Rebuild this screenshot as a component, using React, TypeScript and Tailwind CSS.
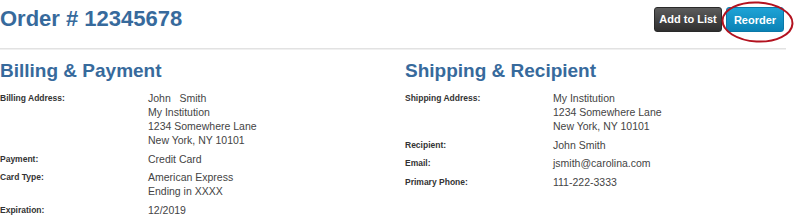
import React from "react";

type Row = { label: string; lines: string[] };

const billing: Row[] = [
  { label: "Billing Address:", lines: ["John   Smith", "My Institution", "1234 Somewhere Lane", "New York, NY 10101"] },
  { label: "Payment:", lines: ["Credit Card"] },
  { label: "Card Type:", lines: ["American Express", "Ending in XXXX"] },
  { label: "Expiration:", lines: ["12/2019"] },
];

const shipping: Row[] = [
  { label: "Shipping Address:", lines: ["My Institution", "1234 Somewhere Lane", "New York, NY 10101"] },
  { label: "Recipient:", lines: ["John Smith"] },
  { label: "Email:", lines: ["jsmith@carolina.com"] },
  { label: "Primary Phone:", lines: ["111-222-3333"] },
];

function Section({ title, rows }: { title: string; rows: Row[] }) {
  return (
    <div className="flex flex-col">
      <h2 className="text-[19px] leading-[22px] font-bold text-[#376a9c] mt-[10px]">{title}</h2>
      <div className="flex flex-col gap-[4.5px] mt-[9px]">
        {rows.map((r) => (
          <div key={r.label} className="flex">
            <div className="w-[148px] shrink-0 text-[8.5px] leading-[14px] font-bold text-[#333]">{r.label}</div>
            <div className="flex flex-col text-[10.5px] leading-[14px] text-[#444]">
              {r.lines.map((l) => (
                <span key={l} className="whitespace-pre">{l}</span>
              ))}
            </div>
          </div>
        ))}
      </div>
    </div>
  );
}

export default function App() {
  return (
    <div className="w-[800px] h-[224px] bg-white overflow-hidden font-['Liberation_Sans',Arial,sans-serif]">
      <div className="w-[786px]">
        <div className="flex items-center justify-between h-[38px]">
          <h1 className="text-[22px] leading-[22px] font-bold text-[#376a9c]">Order # 12345678</h1>
          <div className="flex items-center gap-[4px] pr-[2px] pt-[1px]">
            <button className="h-[25px] w-[68px] rounded-[3px] border border-[#2a2a2a] bg-gradient-to-b from-[#5c5c5c] to-[#2f2f2f] text-white text-[11px] font-bold">
              Add to List
            </button>
            <div className="relative">
              <button className="h-[25px] w-[58px] rounded-[3px] border border-[#0a78a8] bg-gradient-to-b from-[#1ea3d6] to-[#0a82b5] text-white text-[11px] font-bold">
                Reorder
              </button>
              <svg className="absolute left-[-5px] top-[-6px] pointer-events-none" width="73" height="42" viewBox="0 0 73 42">
                <ellipse cx="36.5" cy="21" rx="35" ry="19.5" fill="none" stroke="#b3121f" strokeWidth="2" transform="rotate(3 36.5 21)" />
              </svg>
            </div>
          </div>
        </div>
        <div className="mt-[10px] h-[2px] border-t border-t-[#e2e2e2] border-b border-b-[#f0f0f0]" />
        <div className="grid grid-cols-[405px_1fr]">
          <Section title="Billing & Payment" rows={billing} />
          <Section title="Shipping & Recipient" rows={shipping} />
        </div>
      </div>
    </div>
  );
}
